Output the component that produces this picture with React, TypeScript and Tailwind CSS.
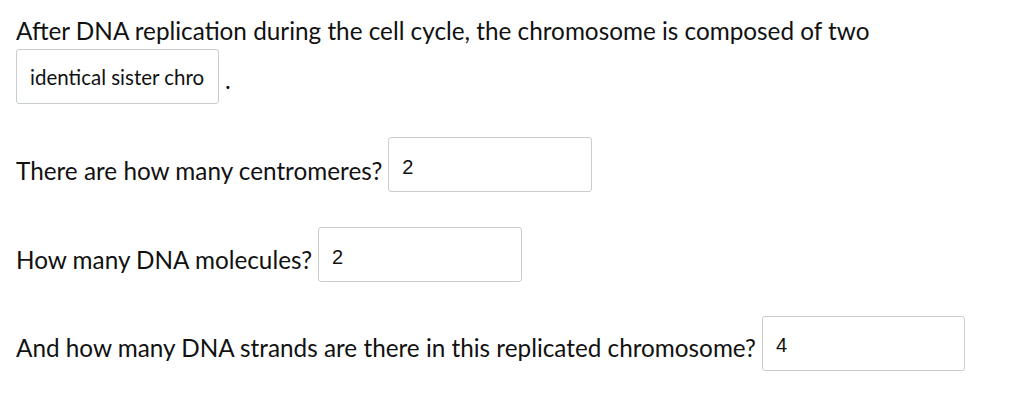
export default function App() {
  const font = { fontFamily: 'Lato, "Open Sans", sans-serif' };
  return (
    <div className="w-[1024px] h-[410px] bg-white text-[#111] overflow-hidden" style={font}>
      <div className="pl-4 pt-4">
        <p className="text-[24.3px] leading-[30px]">
          After DNA replication during the cell cycle, the chromosome is composed of two
        </p>

        {/* blank 1 */}
        <div className="mt-[3px] flex items-start">
          <div className="w-[203px] h-[55px] border border-[#c7cdd1] rounded-[3px] pl-[13px] pt-[15px] text-[20.5px] leading-[24px] whitespace-nowrap overflow-hidden">
            identical sister chro
          </div>
          <span className="ml-[6px] mt-[16px] text-[24.3px] leading-[30px]">.</span>
        </div>

        {/* centromeres */}
        <div className="mt-[33px] flex items-start">
          <span className="mt-[19px] text-[24.3px] leading-[30px]">There are how many centromeres?</span>
          <div className="ml-[6px] w-[204px] h-[55px] border border-[#c7cdd1] rounded-[3px] pl-[13px] pt-[18px] text-[20px] leading-[22px] font-['Liberation_Sans',Arial,sans-serif]">
            2
          </div>
        </div>

        {/* molecules */}
        <div className="mt-[35px] flex items-start">
          <span className="mt-[18px] text-[24.3px] leading-[30px]">How many DNA molecules?</span>
          <div className="ml-[6px] w-[204px] h-[55px] border border-[#c7cdd1] rounded-[3px] pl-[13px] pt-[18px] text-[20px] leading-[22px] font-['Liberation_Sans',Arial,sans-serif]">
            2
          </div>
        </div>

        {/* strands */}
        <div className="mt-[34px] flex items-start">
          <span className="mt-[17px] text-[24.3px] leading-[30px]">And how many DNA strands are there in this replicated chromosome?</span>
          <div className="ml-[6px] w-[203px] h-[55px] border border-[#c7cdd1] rounded-[3px] pl-[13px] pt-[17px] text-[20px] leading-[22px] font-['Liberation_Sans',Arial,sans-serif]">
            4
          </div>
        </div>
      </div>
    </div>
  );
}
